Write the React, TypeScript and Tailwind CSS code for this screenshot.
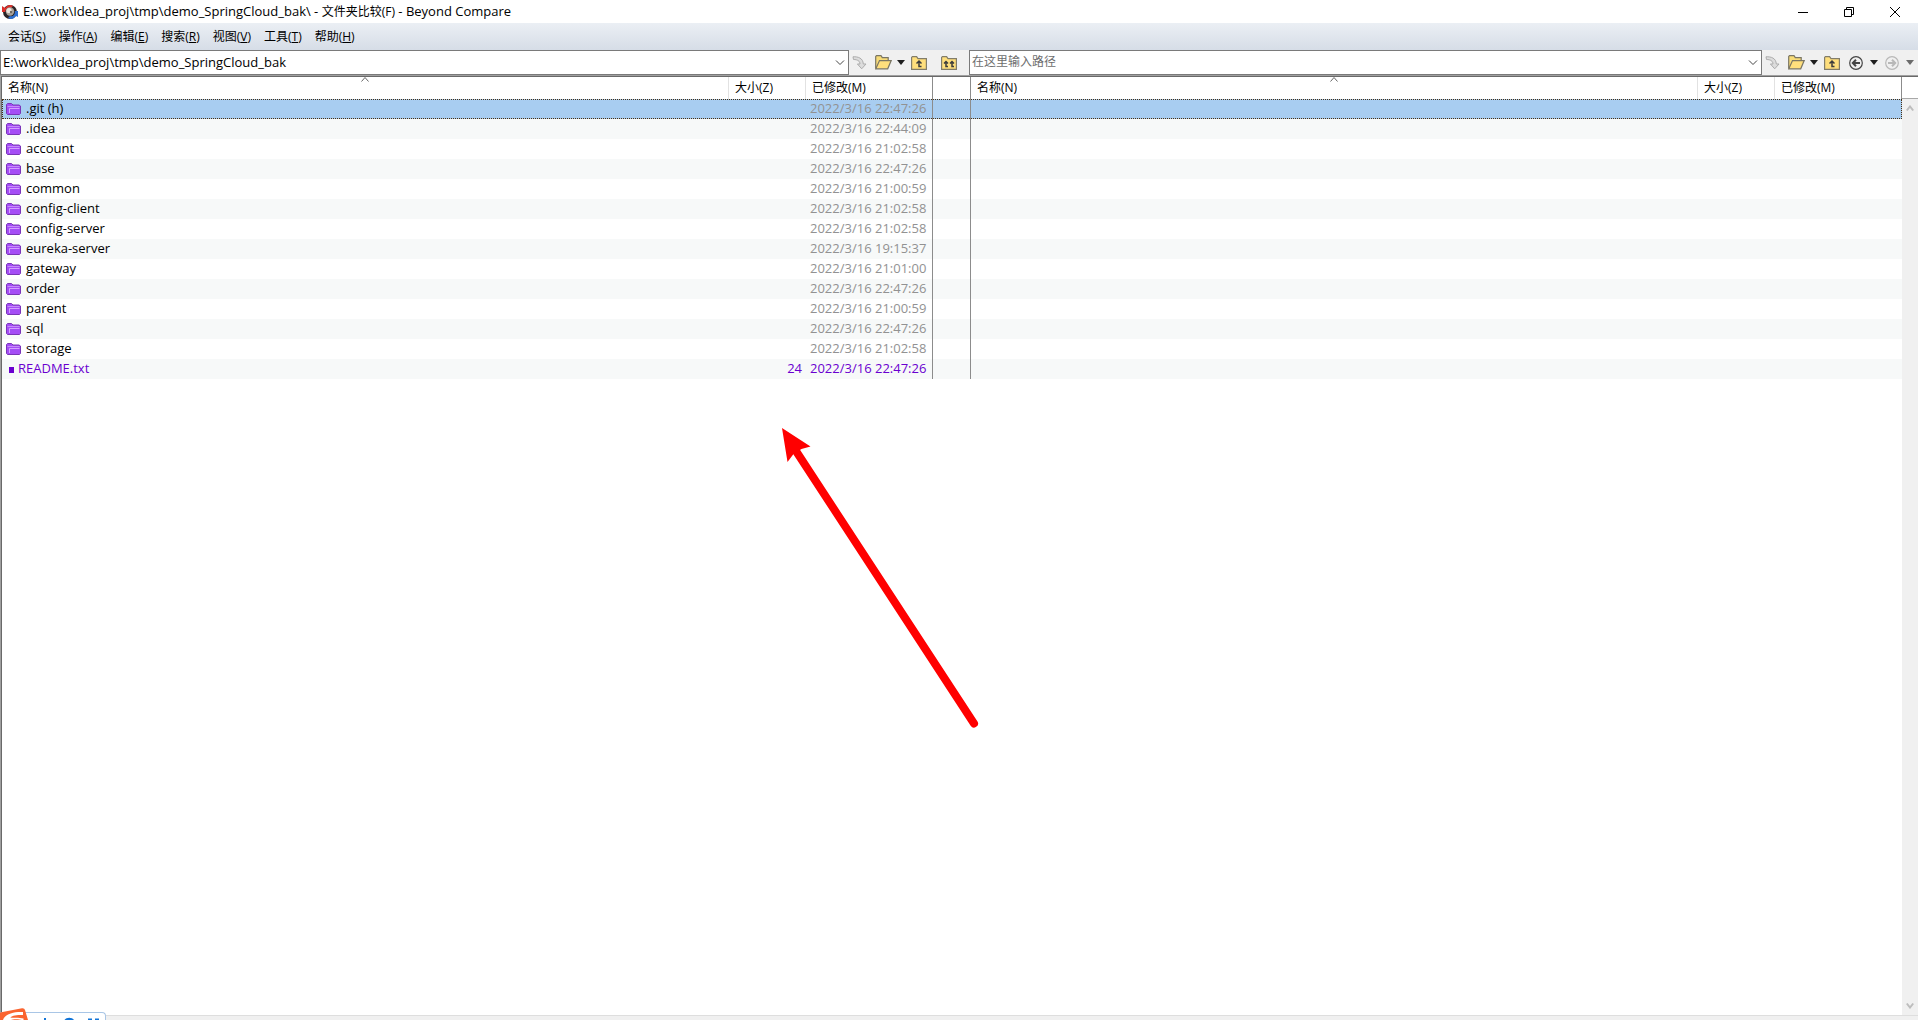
import React from "react";

type Entry = { name: string; modified: string; size?: string };

const entries: Entry[] = [
  { name: ".git (h)", modified: "2022/3/16 22:47:26" },
  { name: ".idea", modified: "2022/3/16 22:44:09" },
  { name: "account", modified: "2022/3/16 21:02:58" },
  { name: "base", modified: "2022/3/16 22:47:26" },
  { name: "common", modified: "2022/3/16 21:00:59" },
  { name: "config-client", modified: "2022/3/16 21:02:58" },
  { name: "config-server", modified: "2022/3/16 21:02:58" },
  { name: "eureka-server", modified: "2022/3/16 19:15:37" },
  { name: "gateway", modified: "2022/3/16 21:01:00" },
  { name: "order", modified: "2022/3/16 22:47:26" },
  { name: "parent", modified: "2022/3/16 21:00:59" },
  { name: "sql", modified: "2022/3/16 22:47:26" },
  { name: "storage", modified: "2022/3/16 21:02:58" },
  { name: "README.txt", modified: "2022/3/16 22:47:26", size: "24" },
];

const menus: [string, string][] = [
  ["会话", "S"],
  ["操作", "A"],
  ["编辑", "E"],
  ["搜索", "R"],
  ["视图", "V"],
  ["工具", "T"],
  ["帮助", "H"],
];

function AppLogo() {
  return (
    <svg width="16" height="16" viewBox="0 0 16 16" aria-hidden="true">
      <circle cx="8" cy="8" r="7" fill="#2a2426" />
      <path d="M0 8V2L3 4C5 1 9 0 11 2L9 4C6 3 4 4 3 8Z" fill="#dd2f2a" />
      <path d="M16 7v6l-2-1c-2 3-5 4-8 2l2-2c3 1 5-1 5-5z" fill="#2d6fd0" />
      <circle cx="8" cy="7.5" r="4.2" fill="#a9a29a" />
      <circle cx="7" cy="6.5" r="2.6" fill="#ebe7df" />
      <circle cx="9" cy="8" r="1.2" fill="#6d675f" />
    </svg>
  );
}

function FolderIcon() {
  return (
    <svg width="15" height="12" viewBox="0 0 15 12" className="shrink-0" aria-hidden="true">
      <path d="M.5 10.500V1.500l1-1h4l1.500 1.500h6l1.500 1v7.500l-1 1h-12z" fill="#a44df5" stroke="#7a35b8" />
      <path d="M1.500 3.500h12" fill="none" stroke="#c78bfa" />
      <path d="M3.500 10V5.500h10" fill="none" stroke="#d4a2ff" />
    </svg>
  );
}

function TurnArrow() {
  return (
    <svg width="15" height="14" viewBox="0 0 15 14" aria-hidden="true">
      <path d="M1 .8C6 .5 11 2 11.300 8H14L9.700 12.800 5.400 8H8C8 5 5.500 3.500 1.500 3.500z" fill="#dcdcdc" stroke="#acacac" />
    </svg>
  );
}

function OpenFolder() {
  return (
    <svg width="17" height="15" viewBox="0 0 17 15" aria-hidden="true">
      <path d="M.7 13.500V1.500l.8-.8H6l1.300 2h5.900v3" fill="#f8dc78" stroke="#7a7664" strokeWidth="1.200" />
      <path d="M.8 13.800 4.500 5.600h11.700l-3.500 8.200z" fill="#ffdf7c" stroke="#7a7664" strokeWidth="1.200" />
    </svg>
  );
}

function UpFolder({ double = false }: { double?: boolean }) {
  return (
    <svg width="16" height="14" viewBox="0 0 16 14" aria-hidden="true">
      <path d="M.6 13.400V1.400L1.400.6h4.200l1.400 2h8.400v10.800z" fill="#ffdf7c" stroke="#827d6a" strokeWidth="1.200" />
      <g fill="none" stroke="#3d3d3d" strokeWidth="1.500">
        {double ? (
          <path d="M3 7.500 5 5.500l2 2M5 6v4.500h2M9 7.500l2-2 2 2M11 6v4.500h2" />
        ) : (
          <path d="M5.500 7.500 8 5l2.500 2.500M8 5.500v5h2.500" />
        )}
      </g>
    </svg>
  );
}

function Caret({ muted = false }: { muted?: boolean }) {
  return (
    <svg width="8" height="5" viewBox="0 0 8 5" aria-hidden="true">
      <path d="M0 0h8L4 5z" fill={muted ? "#6b6b6b" : "#1f1f1f"} />
    </svg>
  );
}

function CircleArrow({ forward = false }: { forward?: boolean }) {
  return (
    <svg width="14" height="14" viewBox="0 0 14 14" fill="none" stroke={forward ? "#b8b8b8" : "#454545"} aria-hidden="true">
      <circle cx="7" cy="7" r="6.300" strokeWidth="1.200" />
      {forward ? (
        <path d="M3 7h7M7 3.800 10.200 7 7 10.200" strokeWidth="2" />
      ) : (
        <path d="M11 7H4M7 3.800 3.800 7 7 10.200" strokeWidth="2" />
      )}
    </svg>
  );
}

function ToolButton({ label, className, children }: { label: string; className: string; children: React.ReactNode }) {
  return (
    <button type="button" aria-label={label} className={`flex h-full shrink-0 items-center justify-center ${className}`}>
      {children}
    </button>
  );
}

function PathBox({ label, value, placeholder }: { label: string; value?: string; placeholder?: string }) {
  return (
    <div className="flex h-[25px] min-w-0 grow border border-[#7a7a7a] bg-white">
      <input
        aria-label={label}
        defaultValue={value}
        placeholder={placeholder}
        className={`min-w-0 grow pb-0.5 pl-0.5 leading-4 outline-none placeholder:text-[#6d6d6d] ${value ? "text-[13px]" : "text-[12px]"}`}
      />
      <button type="button" aria-label="展开路径列表" className="flex w-4 items-center justify-center">
        <svg width="10" height="6" viewBox="0 0 10 6" fill="none" stroke="#444" aria-hidden="true">
          <path d="m1 .5 4 4 4-4" />
        </svg>
      </button>
    </div>
  );
}

function SortMark() {
  return (
    <svg width="8" height="5" viewBox="0 0 8 5" fill="none" stroke="#666" className="absolute top-0 left-1/2 -translate-x-1/2" aria-hidden="true">
      <path d="m.5 4.500 3.500-4 3.500 4" />
    </svg>
  );
}

function PaneHeaders() {
  return (
    <>
      <th className="relative border-r border-[#e2e2e2] pl-1.5">
        名称(N)
        <SortMark />
      </th>
      <th className="border-r border-[#e2e2e2] pl-1.5">大小(Z)</th>
      <th className="border-r border-[#8c8c8c] pl-1.5">已修改(M)</th>
    </>
  );
}

function Row({ entry, index }: { entry: Entry; index: number }) {
  const isFile = entry.size !== undefined;
  const tone = isFile ? "text-[#6a00d0]" : "text-[#929292]";
  const fill =
    index === 0
      ? "bg-[#a8cdf1] outline-1 -outline-offset-1 outline-dotted outline-[#4a3010]"
      : index % 2
        ? "bg-[#f7f9f9]"
        : "bg-white";
  return (
    <tr className={`h-5 text-[13px] leading-[18px] ${fill}`}>
      <td className="p-0">
        {isFile ? (
          <div className="flex h-5 items-center gap-1 pl-[7px] text-[#6a00d0]">
            <span className="mt-0.5 h-1.5 w-[5px] bg-[#6a00d0]" />
            <span className="pb-0.5">{entry.name}</span>
          </div>
        ) : (
          <div className="flex h-5 items-center gap-[5px] pl-1 text-black">
            <FolderIcon />
            <span className="pb-0.5">{entry.name}</span>
          </div>
        )}
      </td>
      <td className={`p-0 pr-1 pb-0.5 text-right ${tone}`}>{entry.size}</td>
      <td className={`border-r border-[#8c8c8c] p-0 pb-0.5 pl-1 whitespace-nowrap ${tone}`}>{entry.modified}</td>
      <td className="border-r border-[#8c8c8c] p-0" />
      <td className="p-0" />
      <td className="p-0" />
      <td className="p-0" />
    </tr>
  );
}

function ImeBar() {
  return (
    <div className="absolute bottom-0 left-0 h-2 w-[106px] rounded-tr-sm border-t border-r border-[#a9c6e6] bg-white">
      <svg width="106" height="12" viewBox="0 0 106 12" className="absolute bottom-0 left-0" aria-hidden="true">
        <path d="M0 4.500 22 .3Q24.500 0 25 2l3 10H0z" fill="#fa6430" />
        <path d="M3 12C5 6 14 3.500 23 4v3C16 6.500 11 8 10.500 9.500c3 .5 8-.5 13 1V12z" fill="#fff" />
        <path d="M11 12c2-1 8-1 11 0z" fill="#fa6430" />
        <path d="M44 10h2v2h-2zM64.500 12c2-3 7.500-3 9.500 0zM88 10.500h4v1.500h-4zM95 10.500h4v1.500h-4z" fill="#1275d8" />
      </svg>
    </div>
  );
}

export default function App() {
  return (
    <div className="relative flex min-h-screen flex-col overflow-hidden bg-[#f0f0f0] font-['Open_Sans','Noto_Sans_CJK_SC',sans-serif] text-[12px] text-black">
      <header className="flex h-[23px] items-center bg-white pl-0.5">
        <AppLogo />
        <h1 className="grow pl-[5px] text-[13px] leading-5">
          E:\work\Idea_proj\tmp\demo_SpringCloud_bak\ - <span className="text-[12px]">文件夹比较(F)</span> - Beyond Compare
        </h1>
        <button type="button" aria-label="最小化" className="flex h-5 w-[46px] items-center justify-center">
          <svg width="10" height="10" viewBox="0 0 10 10" stroke="#000"><path d="M0 5.500h10" /></svg>
        </button>
        <button type="button" aria-label="还原" className="flex h-5 w-[46px] items-center justify-center">
          <svg width="10" height="10" viewBox="0 0 10 10" fill="none" stroke="#000"><path d="M.5 2.500h7v7h-7zM2.500 2.500v-2h7v7h-2" /></svg>
        </button>
        <button type="button" aria-label="关闭" className="flex h-5 w-[46px] items-center justify-center">
          <svg width="10" height="10" viewBox="0 0 10 10" fill="none" stroke="#000"><path d="m0 0 10 10M10 0 0 10" /></svg>
        </button>
      </header>

      <nav className="flex h-[27px] items-center gap-[13px] bg-linear-to-b from-[#ebeff4] to-[#d6dde7] pl-2">
        {menus.map(([label, key]) => (
          <button type="button" key={key} className="leading-5 whitespace-nowrap">
            {label}(<u>{key}</u>)
          </button>
        ))}
      </nav>

      <div className="grid h-[25px] grid-cols-[calc(50%+10px)_minmax(0,1fr)]">
        <div className="flex min-w-0">
          <PathBox label="左侧路径" value="E:\work\Idea_proj\tmp\demo_SpringCloud_bak" />
          <div className="flex w-[120px] shrink-0 items-center">
            <ToolButton label="转到" className="w-5"><TurnArrow /></ToolButton>
            <ToolButton label="浏览文件夹" className="w-7"><OpenFolder /></ToolButton>
            <ToolButton label="浏览选项" className="w-2"><Caret /></ToolButton>
            <ToolButton label="上级文件夹" className="w-7"><UpFolder /></ToolButton>
            <ToolButton label="两侧上级文件夹" className="w-8"><UpFolder double /></ToolButton>
          </div>
        </div>
        <div className="flex min-w-0">
          <PathBox label="右侧路径" placeholder="在这里输入路径" />
          <div className="flex w-[156px] shrink-0 items-center">
            <ToolButton label="转到" className="w-5"><TurnArrow /></ToolButton>
            <ToolButton label="浏览文件夹" className="w-7"><OpenFolder /></ToolButton>
            <ToolButton label="浏览选项" className="w-2"><Caret /></ToolButton>
            <ToolButton label="上级文件夹" className="w-7"><UpFolder /></ToolButton>
            <ToolButton label="后退" className="w-5"><CircleArrow /></ToolButton>
            <ToolButton label="后退历史" className="w-4"><Caret /></ToolButton>
            <ToolButton label="前进" className="w-5"><CircleArrow forward /></ToolButton>
            <ToolButton label="前进历史" className="w-4"><Caret muted /></ToolButton>
          </div>
        </div>
      </div>

      <main className="flex grow border-t border-l border-[#a0a0a0] bg-white">
        <div className="flex grow border-t border-l border-[#696969]">
          <div className="min-w-0 grow">
            <table className="w-full table-fixed border-separate border-spacing-0">
              <colgroup>
                <col />
                <col className="w-[77px]" />
                <col className="w-[127px]" />
                <col className="w-[38px]" />
                <col />
                <col className="w-[77px]" />
                <col className="w-[127px]" />
              </colgroup>
              <thead>
                <tr className="h-[22px] text-left leading-5 *:py-0 *:font-normal">
                  <PaneHeaders />
                  <td className="border-r border-[#8c8c8c]" />
                  <PaneHeaders />
                </tr>
              </thead>
              <tbody>
                {entries.map((entry, index) => (
                  <Row key={entry.name} entry={entry} index={index} />
                ))}
              </tbody>
            </table>
          </div>
          <div className="flex w-4 shrink-0 flex-col">
            <div className="h-[22px] border-b border-[#a8a8a8] bg-white" />
            <div className="flex grow flex-col items-center justify-between bg-[#f0f0f0] py-1.5">
              <button type="button" aria-label="向上滚动">
                <svg width="8" height="7" viewBox="0 0 8 7" fill="none" stroke="#bdbdbd" strokeWidth="2" className="block"><path d="m.8 5.500 3.200-4 3.200 4" /></svg>
              </button>
              <button type="button" aria-label="向下滚动">
                <svg width="8" height="7" viewBox="0 0 8 7" fill="none" stroke="#bdbdbd" strokeWidth="2" className="block"><path d="m.8 1.500 3.200 4 3.200-4" /></svg>
              </button>
            </div>
          </div>
        </div>
      </main>
      <footer className="h-[5px] border-t border-[#dedede] bg-[#f0f0f0]" />

      <svg width="200" height="304" viewBox="0 0 200 304" className="pointer-events-none absolute top-[427px] left-[780px]" aria-hidden="true">
        <path d="m16 24 178 272.500" stroke="#f00" strokeWidth="8" strokeLinecap="round" />
        <path d="m2 1 28.500 18.500-9 2.500-8 5-6 8z" fill="#f00" />
      </svg>
      <ImeBar />
    </div>
  );
}
